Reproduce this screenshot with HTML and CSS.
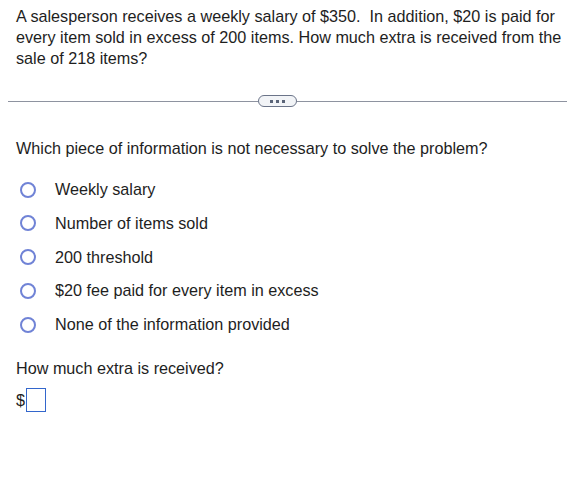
FILE: index.html
```html
<!DOCTYPE html>
<html>
<head>
<meta charset="utf-8">
<link rel="stylesheet" href="styles.css">
</head>
<body>
<div class="problem">A salesperson receives a weekly salary of $350.&nbsp; In addition, $20 is paid for every item sold in excess of 200 items. How much extra is received from the sale of 218 items?</div>
<div class="divider">
  <span class="rule rule-left"></span>
  <span class="more"><i></i><i></i><i></i></span>
  <span class="rule"></span>
</div>
<div class="question">Which piece of information is not necessary to solve the problem?</div>
<ul class="options">
  <li><span class="radio"></span><span>Weekly salary</span></li>
  <li><span class="radio"></span><span>Number of items sold</span></li>
  <li><span class="radio"></span><span>200 threshold</span></li>
  <li><span class="radio"></span><span>$20 fee paid for every item in excess</span></li>
  <li><span class="radio"></span><span>None of the information provided</span></li>
</ul>
<div class="question2">How much extra is received?</div>
<div class="answer"><span class="dollar">$</span><span class="box"></span></div>
</body>
</html>
```
FILE: styles.css
```css
html, body {
  margin: 0;
  padding: 0;
  background: #fff;
}
body {
  font-family: "Liberation Sans", Arial, sans-serif;
  font-size: 16.2px;
  color: #1e1e1e;
}
.problem {
  padding: 6px 4px 0 16px;
  line-height: 21px;
}
.divider {
  display: flex;
  align-items: center;
  margin: 25px 1px 0 8px;
  height: 14px;
}
.rule {
  flex: 1;
  height: 1px;
  background: #8e93a0;
}
.rule-left {
  flex: none;
  width: 250px;
}
.more {
  width: 37px;
  height: 10px;
  border: 1.5px solid #6b7489;
  border-radius: 7px;
  background: #f2f4f7;
  display: flex;
  align-items: center;
  justify-content: center;
  gap: 3px;
}
.more i {
  width: 3px;
  height: 3px;
  background: #5a6478;
}
.question {
  margin-top: 30px;
  padding-left: 16px;
  line-height: 21px;
}
.options {
  list-style: none;
  margin: 20px 0 0;
  padding: 0 0 0 20px;
  display: flex;
  flex-direction: column;
  gap: 12.75px;
}
.options li {
  display: flex;
  align-items: center;
  height: 21px;
  line-height: 21px;
}
.radio {
  width: 12px;
  height: 12px;
  border: 2px solid #7083d6;
  border-radius: 50%;
  margin-right: 19px;
  flex: none;
}
.question2 {
  margin-top: 23px;
  padding-left: 16px;
  line-height: 21px;
}
.answer {
  display: flex;
  align-items: center;
  padding-left: 16px;
  margin-top: 9px;
}
.dollar {
  line-height: 21px;
  margin-right: 1px;
}
.box {
  width: 18px;
  height: 22px;
  border: 1.5px solid #3366cc;
}
```
